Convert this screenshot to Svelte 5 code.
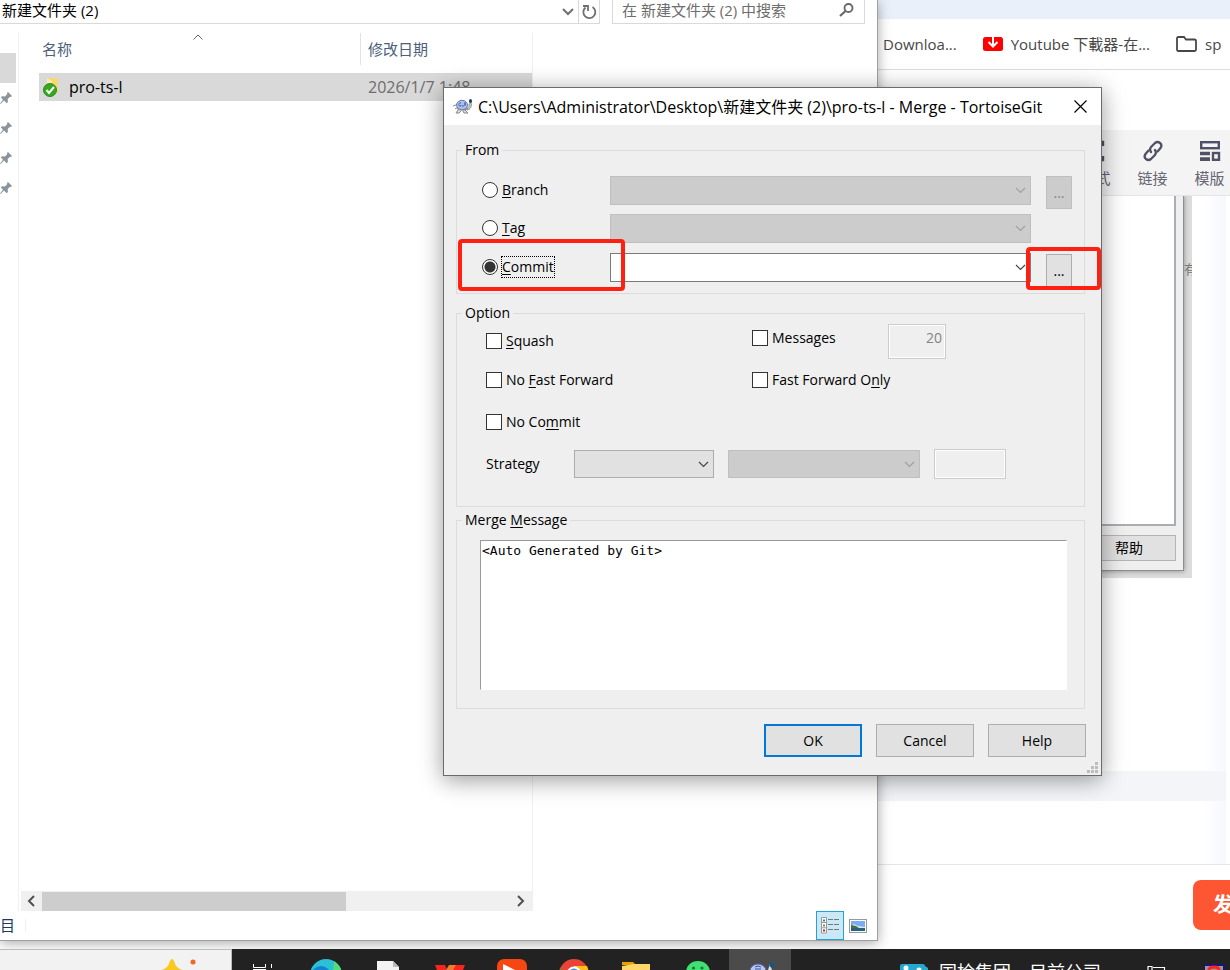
<script>
  const pins = [1, 2, 3, 4]

  let source = $state("commit")
  let message = $state("<Auto Generated by Git>")

  const sources = [
    { id: "branch", key: "B", rest: "ranch", browse: true },
    { id: "tag", key: "T", rest: "ag", browse: false },
    { id: "commit", key: "C", rest: "ommit", browse: true },
  ]
</script>

{#snippet chevron()}
  <svg class="chevron" width="11" height="7" viewBox="0 0 11 7" aria-hidden="true">
    <path d="M1 1l4.5 4.5L10 1" fill="none" stroke="currentColor" stroke-width="1.2" />
  </svg>
{/snippet}

{#snippet tortoise()}
  <svg width="20" height="18" viewBox="0 0 20 18" aria-hidden="true">
    <path d="M0 8l4-1.500M2 11l3-2M5 12l-2 3h3l2-2M12 12l3 3h-4l-1-2" fill="#ddd" stroke="#888" />
    <path d="M14 10c2 0 2-2 2-4l2-1 .5 2c-.5 3-2 5-4.500 5z" fill="#ccc" stroke="#888" stroke-width=".8" />
    <ellipse cx="9" cy="7" rx="5.5" ry="4.700" fill="#a9c0f2" stroke="#6d80b4" />
    <path d="M4 10.500c3 2 8 2 11 0" fill="none" stroke="#888" stroke-width="1.300" />
    <path d="M8 5c-3-1-3 4 0 3V7M10 7v2M12 4v4M11 6h2" fill="none" stroke="#46589b" stroke-width=".9" />
    <rect x="16" y="1" width="3" height="4" rx="1.5" fill="#164b70" />
  </svg>
{/snippet}

<div class="desktop">
  <section class="browser">
    <div class="tabs"></div>
    <nav class="bookmarks">
      <a href="#downloads">Downloa...</a>
      <a href="#youtube">
        <svg width="20" height="16" viewBox="0 0 20 16" aria-hidden="true">
          <rect y="1" width="20" height="14" rx="2.5" fill="#f00" />
          <path d="M10 0v10M5.5 6l4.5 4.5L14.500 6" fill="none" stroke="#fff" stroke-width="2" />
        </svg>
        Youtube 下載器-在...
      </a>
      <a class="folder" href="#sp">
        <svg width="21" height="16" viewBox="0 0 21 16" aria-hidden="true">
          <path d="M1 2.500Q1 1 2.500 1H8l2 2.500h8.500Q20 3.500 20 5v8.500q0 1.500-1.500 1.500h-16Q1 15 1 13.500z" fill="none" stroke="#474747" stroke-width="1.8" />
        </svg>
        sp
      </a>
    </nav>
    <div class="toolbar">
      <button type="button">
        <svg width="22" height="22" viewBox="0 0 22 22" aria-hidden="true">
          <path d="M18 6V2H4l8 9-8 9h14v-4" fill="none" stroke="#505066" stroke-width="2.4" />
        </svg>
        公式
      </button>
      <button type="button">
        <svg width="22" height="22" viewBox="0 0 22 22" fill="none" stroke="#505066" stroke-width="2.300" stroke-linecap="round" aria-hidden="true">
          <path d="M9 12Q7 9 9.500 6.500L13 3q2.500-2 5 0t.5 5l-3 3.500" />
          <path d="M13 10Q15 13 12.500 15.500L9 19q-2.500 2-5 0t-.5-5l3-3.500" />
        </svg>
        链接
      </button>
      <button type="button">
        <svg width="22" height="22" viewBox="0 0 22 22" aria-hidden="true">
          <g fill="none" stroke="#505066" stroke-width="2.4">
            <rect x="2.200" y="2.200" width="17.600" height="6" />
            <rect x="14" y="13" width="6" height="6.800" />
          </g>
          <path d="M1 11.800h10v3.400H1zM1 17.200h10v3.800H1z" fill="#505066" />
        </svg>
        模版
      </button>
    </div>
    <div class="page">
      <div class="shot">
        <div class="shot-window">
          <div class="shot-panel"></div>
          <button type="button">帮助</button>
        </div>
        <span class="shot-text">有选</span>
      </div>
      <div class="band"></div>
    </div>
    <div class="publish">
      <button type="button">发布</button>
    </div>
  </section>

  <section class="explorer">
    <div class="address-row">
      <div class="address">
        <span>新建文件夹 (2)</span>
        <button type="button" aria-label="Previous locations">
          <svg width="12" height="8" viewBox="0 0 12 8"><path d="M1 1l5 5 5-5" fill="none" stroke="#707070" stroke-width="2" /></svg>
        </button>
        <button type="button" class="refresh" aria-label="Refresh">
          <svg width="15" height="16" viewBox="0 0 15 16">
            <path d="M10.500 3a6 6 0 1 1-7 .5" fill="none" stroke="#707070" stroke-width="1.800" />
            <path d="M1 2h5v5" fill="none" stroke="#707070" stroke-width="1.800" />
          </svg>
        </button>
      </div>
      <label class="search">
        <input type="text" placeholder="在 新建文件夹 (2) 中搜索" aria-label="Search" />
        <svg width="16" height="14" viewBox="0 0 16 14" aria-hidden="true">
          <circle cx="9.500" cy="5" r="4" fill="none" stroke="#666" stroke-width="1.800" />
          <path d="M6.500 8L1 13" stroke="#666" stroke-width="2.200" />
        </svg>
      </label>
    </div>

    <div class="panes">
      <div class="tree">
        <div class="tree-selected"></div>
        {#each pins as pin (pin)}
          <svg width="13" height="14" viewBox="0 0 13 14" aria-hidden="true">
            <path d="M8 1l4 4-1 1-1-.3-2.300 2.300.2 3-1.200 1.200L4 9.500.5 13 0 12.500 3 8.800.8 6.300 2 5.200l3 .2L7.300 3 7 2z" fill="#8a949d" />
          </svg>
        {/each}
      </div>
      <div class="files">
        <svg class="sort" width="10" height="6" viewBox="0 0 10 6" aria-hidden="true">
          <path d="M.5 5.500L5 1l4.500 4.500" fill="none" stroke="#666" />
        </svg>
        <table>
          <thead>
            <tr><th class="name"><span>名称</span></th><th><span>修改日期</span></th></tr>
          </thead>
          <tbody>
            <tr>
              <td>
                <div class="file">
                  <svg width="16" height="20" viewBox="0 0 16 20" aria-hidden="true">
                    <path d="M4 1h11v15H4z" fill="#f8d775" />
                    <path d="M4 1l5 3v12H4z" fill="#ffe9ae" />
                    <circle cx="7" cy="13" r="6.500" fill="#36a81e" stroke="#278d16" />
                    <path d="M3.500 13l2.500 3 5-6" fill="none" stroke="#fff" stroke-width="2" />
                  </svg>
                  pro-ts-l
                </div>
              </td>
              <td class="date">2026/1/7 1:48</td>
            </tr>
          </tbody>
        </table>
        <div class="scrollbar">
          <svg width="8" height="12" viewBox="0 0 8 12"><path d="M7 1L2 6l5 5" fill="none" stroke="#505050" stroke-width="2" /></svg>
          <div class="track"><div class="thumb"></div></div>
          <svg width="8" height="12" viewBox="0 0 8 12"><path d="M1 1l5 5-5 5" fill="none" stroke="#505050" stroke-width="2" /></svg>
        </div>
      </div>
    </div>

    <div class="status">
      <span class="count">目</span>
      <button type="button" class="view active" aria-label="Details">
        <svg width="19" height="17" viewBox="0 0 19 17">
          <path d="M.5.5h5v15.500h-5zM.5 5.500h5M.5 10.800h5" fill="#fff" stroke="#999" />
          <path d="M2 2.500h2v2H2z" fill="#3a7fc4" /><path d="M2 7.500h2v2H2z" fill="#a8763a" /><path d="M2 12.500h2v2H2z" fill="#c42b1c" />
          <path d="M7 2.500h5M13 2.500h5M7 7.500h5M13 7.500h5M7 12.500h5M13 12.500h5" stroke="#777" />
        </svg>
      </button>
      <button type="button" class="view" aria-label="Large thumbnails">
        <svg width="18" height="14" viewBox="0 0 18 14">
          <rect x=".5" y=".5" width="17" height="13" fill="#fff" stroke="#999" />
          <path d="M2 2h14v10H2z" fill="#79acf0" />
          <path d="M2 7l3-2 4 2 7 1v2H2z" fill="#d7ebf5" />
          <path d="M2 6l5 1 3 2H2z" fill="#3f704f" />
          <path d="M2 9h14v3H2z" fill="#28627c" />
        </svg>
      </button>
    </div>
  </section>

  <section class="dialog">
    <header>
      {@render tortoise()}
      <h1>C:\Users\Administrator\Desktop\新建文件夹 (2)\pro-ts-l - Merge - TortoiseGit</h1>
      <button type="button" aria-label="Close">
        <svg width="13" height="13" viewBox="0 0 13 13"><path d="M.5.5l12 12M12.500.5l-12 12" stroke="#000" stroke-width="1.200" /></svg>
      </button>
    </header>

    <form onsubmit={(e) => e.preventDefault()}>
      <fieldset>
        <legend>From</legend>
        <div class="from">
          <div class="sources">
            {#each sources as item (item.id)}
              <label class="option">
                <input type="radio" name="source" value={item.id} bind:group={source} />
                <span class:focused={source === item.id}><u>{item.key}</u>{item.rest}</span>
              </label>
              <div class="combo editable">
                <select aria-label={item.id} disabled={source !== item.id}><option></option></select>
                {@render chevron()}
              </div>
              {#if item.browse}
                <button type="button" class="browse" disabled={source !== item.id}>...</button>
              {:else}
                <span></span>
              {/if}
            {/each}
            <div class="mark mark-source"></div>
            <div class="mark mark-browse"></div>
          </div>
        </div>
      </fieldset>

      <fieldset class="second">
        <legend>Option</legend>
        <div class="options">
          <div class="checks">
            <label class="option"><input type="checkbox" /><span><u>S</u>quash</span></label>
            <div class="messages">
              <label class="option"><input type="checkbox" /><span>Messages</span></label>
              <input type="text" class="field count-field" value="20" aria-label="Message count" disabled />
            </div>
            <label class="option"><input type="checkbox" /><span>No <u>F</u>ast Forward</span></label>
            <label class="option"><input type="checkbox" /><span>Fast Forward O<u>n</u>ly</span></label>
            <label class="option"><input type="checkbox" /><span>No Co<u>m</u>mit</span></label>
          </div>
          <div class="strategy">
            <label for="strategy">Strategy</label>
            <div class="combo short">
              <select id="strategy"><option></option></select>
              {@render chevron()}
            </div>
            <div class="combo long">
              <select aria-label="Strategy option" disabled><option></option></select>
              {@render chevron()}
            </div>
            <input type="text" class="field" aria-label="Strategy parameter" disabled />
          </div>
        </div>
      </fieldset>

      <fieldset class="third">
        <legend><label for="message">Merge <u>M</u>essage</label></legend>
        <div class="message">
          <textarea id="message" spellcheck="false" bind:value={message}></textarea>
        </div>
      </fieldset>

      <div class="actions">
        <button type="submit" class="default">OK</button>
        <button type="button">Cancel</button>
        <button type="button">Help</button>
      </div>
    </form>
    <svg class="grip" width="11" height="11" viewBox="0 0 11 11" aria-hidden="true">
      <path d="M8 0h3v3H8zM4 4h3v3H4zM8 4h3v3H8zM0 8h3v3H0zM4 8h3v3H4zM8 8h3v3H8z" fill="#bcbcbc" />
    </svg>
  </section>

  <footer class="taskbar">
    <div class="task-search">
      <svg width="40" height="21" viewBox="0 0 40 21" aria-hidden="true">
        <path d="M0 20q7-1 9-9 2-4 4 0 2 8 9 9v1H0z" fill="#fbc91b" />
        <circle cx="32" cy="12" r="2.500" fill="#f4661f" />
      </svg>
    </div>
    <div class="apps">
      <div class="app">
        <svg width="32" height="21" viewBox="0 0 32 21"><path d="M5.500 15v3.500h12V15M5 20.500h13M23.500 15v4" fill="none" stroke="#fff" /></svg>
      </div>
      <div class="app">
        <svg width="32" height="21" viewBox="0 0 32 21"><circle cx="16" cy="26" r="16" fill="#2ac0d5" /><path d="M24 12q8 5 8 14l-9-3z" fill="#55dc78" /><circle cx="11" cy="27" r="10" fill="#1780d2" /></svg>
      </div>
      <div class="app">
        <svg width="32" height="21" viewBox="0 0 32 21"><path d="M5 12h16l6 6v3H5z" fill="#f3f3f3" /><path d="M21 12v6h6z" fill="#bbb" /></svg>
      </div>
      <div class="app">
        <svg width="32" height="21" viewBox="0 0 32 21"><path d="M1 16h10l2 5H3zM20 16h11l-2 5H18z" fill="#f6261f" /><path d="M15 16h7l-3 5h-7z" fill="#f07a31" /></svg>
      </div>
      <div class="app">
        <svg width="32" height="21" viewBox="0 0 32 21"><rect x="1" y="10" width="30" height="30" rx="7" fill="#f64712" /><path d="M7 15l14 7H7z" fill="#fff" /></svg>
      </div>
      <div class="app">
        <svg width="32" height="21" viewBox="0 0 32 21"><circle cx="16" cy="25" r="15" fill="#e94335" /><path d="M16 17h13l2 6H16z" fill="#fbc116" /><path d="M2 19l6 6H1z" fill="#2ba24c" /><circle cx="16" cy="25" r="7.500" fill="#fff" /><circle cx="16" cy="25" r="5.500" fill="#4285f4" /></svg>
      </div>
      <div class="app">
        <svg width="32" height="21" viewBox="0 0 32 21"><path d="M2 13h11l3 3H2z" fill="#e6a200" /><path d="M2 17l12-2h16v6H2z" fill="#ffd768" /></svg>
      </div>
      <div class="app">
        <svg width="32" height="21" viewBox="0 0 32 21"><ellipse cx="16" cy="23" rx="12" ry="11" fill="#3fe173" /><circle cx="11.500" cy="19" r="1.600" fill="#197b38" /><circle cx="20" cy="19" r="1.600" fill="#197b38" /></svg>
      </div>
      <div class="app current">
        <svg width="32" height="21" viewBox="0 0 32 21"><ellipse cx="14" cy="22" rx="8" ry="7" fill="#b6c6f5" stroke="#5265a8" /><path d="M11 18q3-2 6 0M11 20h6" stroke="#405292" fill="none" /><path d="M24 21l2-6 2 6z" fill="#ddd" /><circle cx="28" cy="16" r="2.500" fill="#0c5d84" /></svg>
      </div>
    </div>
    <div class="window-entry">
      <svg width="28" height="21" viewBox="0 0 28 21" aria-hidden="true"><path d="M0 17q0-2 2-2h21q2 0 2 2l3 2v2H0z" fill="#24aacc" /><circle cx="6" cy="19" r="2.500" fill="#fff" /><circle cx="19" cy="21" r="2.500" fill="#fff" /></svg>
      <span>国检集团</span>
      <span>目前公司</span>
    </div>
    <div class="tray">
      <svg width="20" height="21" viewBox="0 0 20 21" aria-hidden="true"><path d="M1 21v-3.500h4V21M6 18.500h11.500V21" fill="none" stroke="#fff" stroke-width="1.200" /></svg>
      <svg width="22" height="21" viewBox="0 0 22 21" aria-hidden="true"><path d="M0 16h20v6H0z" fill="#999" stroke="#161678" stroke-width="2" /><path d="M5 21q0-3 5-3t5 3" fill="none" stroke="#f22" stroke-width="3" /></svg>
    </div>
  </footer>
</div>

<style>
  :global(body) {
    margin: 0;
  }

  .desktop {
    position: relative;
    min-height: 100vh;
    overflow: hidden;
    background: #fff;
    color: #000;
    font-family: "Open Sans", "Noto Sans CJK SC", sans-serif;
    font-size: 15px;
    line-height: 20px;
  }

  .desktop * {
    box-sizing: border-box;
  }

  svg {
    display: block;
    flex: none;
  }

  button,
  input,
  select,
  textarea {
    margin: 0;
    font: inherit;
    color: inherit;
    border-radius: 0;
  }

  button {
    padding: 0;
    border: none;
    background: none;
  }

  /* browser */
  .browser {
    position: absolute;
    inset: 0 0 21px 878px;
    display: flex;
    flex-direction: column;
    overflow: hidden;
  }

  .tabs {
    height: 19px;
    background: #eaf0f9;
  }

  .bookmarks {
    display: flex;
    align-items: center;
    gap: 26px;
    height: 51px;
    padding-left: 5px;
    border-bottom: 1px solid #dcdde0;
    white-space: nowrap;
  }

  .bookmarks a {
    display: flex;
    align-items: center;
    gap: 8px;
    color: #474747;
    text-decoration: none;
  }

  .toolbar {
    display: flex;
    justify-content: flex-end;
    height: 66px;
    margin-top: 60px;
    padding-top: 10px;
    background: #f4f4f4;
    border-bottom: 1px solid #e4e4e4;
  }

  .toolbar button {
    display: flex;
    flex-direction: column;
    align-items: center;
    gap: 6px;
    width: 57px;
    color: #666674;
  }

  .toolbar button:last-child {
    margin-right: -8px;
  }

  .page {
    flex: 1;
    display: flex;
    flex-direction: column;
    justify-content: space-between;
    margin-right: 4px;
    background: linear-gradient(to left, #f7f8fd, #fff 24px);
  }

  .shot {
    display: flex;
    width: 314px;
    height: 382px;
    padding-bottom: 7px;
    overflow: hidden;
    background: #dcdcdc;
  }

  .shot-window {
    flex: none;
    display: flex;
    flex-direction: column;
    align-items: flex-end;
    gap: 9px;
    width: 306px;
    padding: 0 7px 9px 0;
    border: solid #8f8f8f;
    border-width: 0 1px 1px 0;
    background: #efefef;
    box-shadow: 0 0 5px rgba(0, 0, 0, 0.4);
  }

  .shot-panel {
    flex: 1;
    width: 100%;
    border: solid #aaadb2;
    border-width: 0 2px 2px 0;
    background: #fff;
  }

  .shot-window button {
    width: 94px;
    height: 26px;
    border: 1px solid #b4b4b4;
    background: #e1e1e1;
    font-size: 14px;
  }

  .shot-text {
    padding-top: 63px;
    color: #777;
    font-size: 13px;
    white-space: nowrap;
  }

  .band {
    height: 30px;
    margin-bottom: 63px;
    background: #f4f5f8;
  }

  .publish {
    display: flex;
    justify-content: flex-end;
    height: 85px;
    padding-top: 15px;
    border-top: 1px solid #e4e5e7;
  }

  .publish button {
    width: 96px;
    height: 50px;
    margin-right: -59px;
    padding-left: 20px;
    border-radius: 8px;
    background: #fe5632;
    color: #fff;
    font-size: 20px;
    font-weight: 700;
    text-align: left;
    white-space: nowrap;
  }

  /* file explorer */
  .explorer {
    position: absolute;
    inset: 0 352px 29px 0;
    display: flex;
    flex-direction: column;
    border: solid #a0a0a0;
    border-width: 0 1px 1px 0;
    background: #fff;
    box-shadow: 0 2px 12px rgba(0, 0, 0, 0.35);
  }

  .address-row {
    display: flex;
    gap: 12px;
    height: 24px;
    padding-right: 12px;
  }

  .address {
    flex: 1;
    display: flex;
    border: solid #d9d9d9;
    border-width: 0 1px 1px 0;
  }

  .address span {
    flex: 1;
    padding-left: 2px;
  }

  .address button {
    display: grid;
    place-items: center;
    width: 20px;
  }

  .address .refresh {
    width: 21px;
    border-left: 1px solid #d9d9d9;
  }

  .search {
    display: flex;
    align-items: center;
    width: 253px;
    padding: 0 9px 3px 9px;
    border: solid #d9d9d9;
    border-width: 0 1px 1px;
  }

  .search input {
    flex: 1;
    min-width: 0;
    padding: 0;
    border: none;
    outline: none;
    background: none;
  }

  .search input::placeholder {
    color: #6d6d6d;
  }

  .panes {
    flex: 1;
    display: flex;
    padding-top: 9px;
  }

  .tree {
    display: flex;
    flex-direction: column;
    gap: 16px;
    width: 19px;
    padding-top: 20px;
    border-right: 1px solid #f0f0f0;
  }

  .tree-selected {
    width: 16px;
    height: 30px;
    margin-bottom: -8px;
    background: #d9d9d9;
  }

  .files {
    position: relative;
    display: flex;
    flex-direction: column;
    justify-content: space-between;
    width: 514px;
    padding-left: 2px;
    border-right: 1px solid #f0f0f0;
  }

  .sort {
    position: absolute;
    top: 1px;
    left: 174px;
  }

  table {
    margin-left: 18px;
    border-collapse: collapse;
    table-layout: fixed;
  }

  th {
    height: 40px;
    padding: 0;
    color: #4c607a;
    font-weight: 400;
    text-align: left;
    vertical-align: top;
  }

  th.name {
    width: 322px;
  }

  th span {
    display: block;
    height: 32px;
    padding: 6px 0 0 7px;
  }

  th.name span {
    padding-left: 3px;
    border-right: 1px solid #e2e2e2;
  }

  td {
    height: 28px;
    padding: 0;
    background: #d9d9d9;
    font-size: 16px;
    white-space: nowrap;
  }

  .file {
    display: flex;
    align-items: center;
    gap: 10px;
    padding-left: 4px;
  }

  .date {
    padding-left: 7px;
    color: #6d6d6d;
  }

  .scrollbar {
    display: flex;
    align-items: center;
    gap: 7px;
    height: 20px;
    padding: 0 7px 0 6px;
    background: #f0f0f0;
  }

  .track {
    flex: 1;
  }

  .thumb {
    width: 65%;
    height: 19px;
    background: #cdcdcd;
  }

  .status {
    display: flex;
    align-items: center;
    height: 29px;
    padding-right: 5px;
  }

  .count {
    width: 26px;
    margin-right: auto;
    border-right: 1px solid #f0f0f0;
    color: #1e395b;
    line-height: 13px;
  }

  .view {
    display: grid;
    place-items: center;
    width: 28px;
    height: 29px;
  }

  .view.active {
    border: 1px solid #26a0da;
    background: #cbe8f6;
  }

  /* merge dialog */
  .dialog {
    position: absolute;
    top: 87px;
    right: 128px;
    left: 443px;
    border: 1px solid #6b6b6b;
    background: #efefef;
    box-shadow: 0 4px 22px rgba(0, 0, 0, 0.4);
  }

  header {
    display: flex;
    align-items: center;
    gap: 5px;
    height: 37px;
    padding-left: 9px;
    background: #fff;
  }

  h1 {
    flex: 1;
    min-width: 0;
    margin: 0;
    font-size: 16px;
    font-weight: 400;
    white-space: nowrap;
  }

  header button {
    display: grid;
    place-items: center;
    width: 42px;
    height: 36px;
  }

  form {
    padding: 15px 15px 18px 12px;
    font-size: 14px;
  }

  fieldset {
    min-width: 0;
    margin: 0 1px 0 0;
    padding: 0;
    border: 1px solid #dcdcdc;
  }

  .second {
    margin-top: 9px;
  }

  .third {
    margin-top: 3px;
  }

  legend {
    margin-left: 5px;
    padding: 0 3px;
  }

  u {
    text-underline-offset: 2px;
  }

  .from {
    padding: 11px 12px 6px 25px;
  }

  .sources {
    position: relative;
    display: grid;
    grid-template-columns: 128px 1fr 26px;
    grid-template-rows: 38px 38px 40px;
    align-items: center;
  }

  .option {
    display: flex;
    align-items: center;
    gap: 4px;
    white-space: nowrap;
  }

  .option input {
    flex: none;
    appearance: none;
    width: 16px;
    height: 16px;
    border: 1px solid #333;
    background: #fff;
  }

  .option input[type="radio"] {
    border-radius: 50%;
  }

  .option input[type="radio"]:checked {
    background: radial-gradient(circle, #333 5px, #fff 6px);
  }

  .focused {
    outline: 1px dotted #000;
  }

  .combo {
    position: relative;
    height: 28px;
  }

  .combo.editable {
    height: 29px;
    margin-right: 15px;
  }

  .combo select {
    appearance: none;
    display: block;
    width: 100%;
    height: 100%;
    border: 1px solid #adadad;
    background: #e1e1e1;
  }

  .combo.editable select {
    border-color: #7a7a7a;
    background: #fff;
  }

  .combo select:disabled,
  .combo.editable select:disabled {
    border-color: #bfbfbf;
    background: #ccc;
    opacity: 1;
  }

  .combo :global(.chevron) {
    position: absolute;
    top: 11px;
    right: 5px;
    color: #444;
    pointer-events: none;
  }

  .combo select:disabled + :global(.chevron) {
    color: #a0a0a0;
  }

  .browse {
    align-self: end;
    height: 33px;
    border: 1px solid #adadad;
    background: #e1e1e1;
  }

  .browse:disabled {
    border-color: #bfbfbf;
    background: #ccc;
    color: #838383;
  }

  .mark {
    position: absolute;
    border: 4px solid #ff2012;
    border-radius: 4px;
    pointer-events: none;
  }

  .mark-source {
    top: 68px;
    left: -24px;
    width: 167px;
    height: 52px;
  }

  .mark-browse {
    top: 76px;
    right: -29px;
    width: 75px;
    height: 43px;
  }

  .options {
    padding: 0 12px 21px 29px;
  }

  .checks {
    display: grid;
    grid-template-columns: 266px 1fr;
    grid-template-rows: 36px 42px 42px;
    align-items: center;
  }

  .messages {
    display: flex;
    align-items: flex-start;
  }

  .messages .option {
    width: 136px;
    height: 28px;
  }

  .field {
    width: 72px;
    height: 30px;
    padding: 0 3px;
    border: 1px solid #ccc;
    outline: 1px solid #fff;
    outline-offset: -2px;
    background: #efefef;
    color: #838383;
  }

  .count-field {
    width: 58px;
    height: 35px;
    padding-bottom: 7px;
    text-align: right;
  }

  .strategy {
    display: flex;
    align-items: center;
    gap: 14px;
    height: 42px;
  }

  .strategy label {
    width: 74px;
  }

  .short {
    width: 140px;
  }

  .long {
    width: 192px;
  }

  .message {
    padding: 10px 17px 18px 23px;
  }

  textarea {
    display: block;
    width: 100%;
    height: 150px;
    padding: 0 1px;
    border: 1px solid;
    border-color: #999 #fff #fff #999;
    outline: none;
    background: #fff;
    font-family: "DejaVu Sans Mono", monospace;
    font-size: 13px;
    resize: none;
  }

  .actions {
    display: flex;
    justify-content: flex-end;
    gap: 14px;
    margin-top: 15px;
  }

  .actions button {
    width: 98px;
    height: 33px;
    border: 1px solid #adadad;
    background: #e1e1e1;
  }

  .actions .default {
    border: 2px solid #0078d7;
  }

  .grip {
    position: absolute;
    right: 3px;
    bottom: 2px;
  }

  /* taskbar */
  .taskbar {
    position: absolute;
    right: 0;
    bottom: 0;
    left: 0;
    display: flex;
    height: 21px;
    overflow: hidden;
    background: #222;
  }

  .task-search {
    display: flex;
    justify-content: flex-end;
    width: 232px;
    padding-right: 30px;
    border: solid #bbb;
    border-width: 1px 1px 0 0;
    background: #f2f2f2;
  }

  .apps {
    display: flex;
    padding-left: 1px;
  }

  .app {
    display: grid;
    place-items: center;
    width: 62px;
  }

  .app.current {
    background: #4b4b4b;
  }

  .window-entry {
    display: flex;
    align-items: flex-start;
    gap: 11px;
    margin-left: auto;
    color: #fff;
    font-size: 18px;
    white-space: nowrap;
  }

  .window-entry span {
    padding-top: 13px;
  }

  .window-entry span + span {
    padding-left: 7px;
  }

  .tray {
    display: flex;
    gap: 37px;
    margin-left: 46px;
    padding-right: 4px;
  }
</style>
